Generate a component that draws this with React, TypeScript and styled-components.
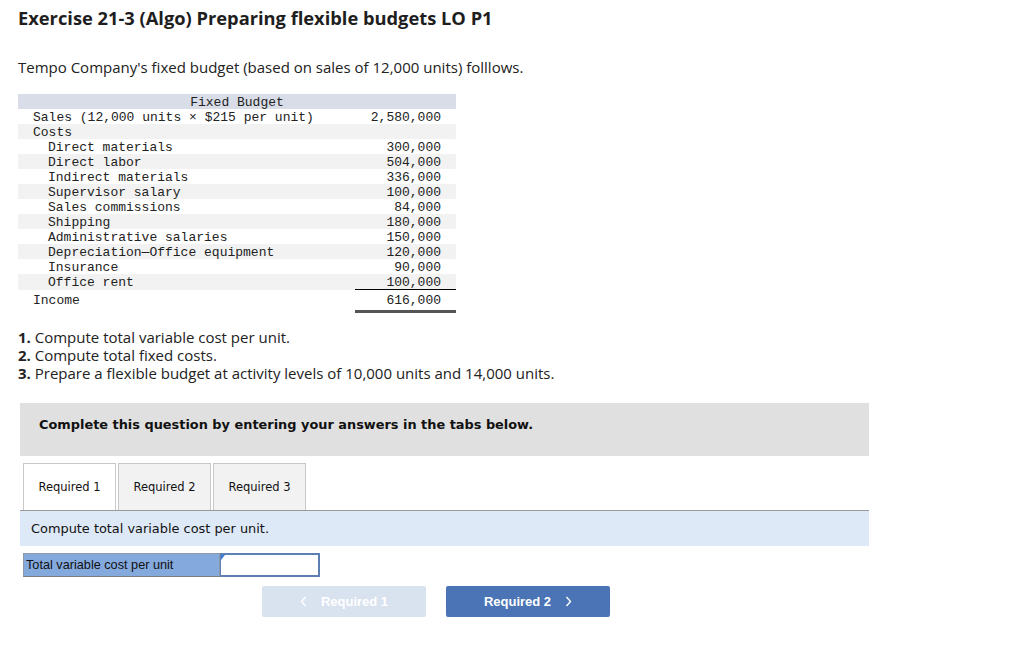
import React from "react";
import styled, { createGlobalStyle } from "styled-components";

const Global = createGlobalStyle`
  html, body { margin: 0; padding: 0; background: #fff; }
  body { font-family: "Open Sans", "Liberation Sans", sans-serif; color: #1a1a1a; }
`;

const Page = styled.div`
  width: 1024px;
  height: 664px;
  padding-left: 18px;
  box-sizing: border-box;
  overflow: hidden;
`;

const Title = styled.h1`
  margin: 0;
  padding-top: 6px;
  font-size: 18.3px;
  line-height: 24px;
  font-weight: 700;
  color: #1e1e1e;
`;

const Intro = styled.p`
  margin: 27px 0 0;
  font-size: 15px;
  line-height: 20px;
  color: #222;
`;

const BudgetTable = styled.table`
  margin-top: 17px;
  width: 438px;
  border-collapse: collapse;
  font-family: "Liberation Mono", "Courier New", monospace;
  font-size: 13px;
  color: #222;
`;

const HeadCell = styled.th`
  background: #d9dde7;
  font-weight: 400;
  text-align: center;
  line-height: 13px;
  height: 13px;
  padding: 2px 0 0;
`;

const Row = styled.tr<{ $striped?: boolean }>`
  background: ${(p) => (p.$striped ? "#f2f2f2" : "#fff")};
`;

const LabelCell = styled.td<{ $indent?: number; $tall?: boolean }>`
  padding: ${(p) => (p.$tall ? "4px" : "2px")} 0 0 ${(p) => 15 + (p.$indent ?? 0) * 15}px;
  line-height: 13px;
  height: ${(p) => (p.$tall ? "16px" : "13px")};
  vertical-align: top;
  white-space: pre;
`;

const ValueCell = styled.td<{ $rule?: "single" | "double"; $tall?: boolean }>`
  width: 86px;
  padding: ${(p) => (p.$tall ? "4px" : "2px")} 15px 0 0;
  text-align: right;
  line-height: 13px;
  height: ${(p) => (p.$tall ? "16px" : "13px")};
  vertical-align: top;
  border-bottom: ${(p) =>
    p.$rule === "single" ? "1px solid #000" : p.$rule === "double" ? "3px solid #555" : "none"};
`;

const Steps = styled.ol`
  list-style: none;
  margin: 15px 0 0;
  padding: 0;
  font-size: 15px;
  line-height: 18px;
  color: #222;
`;

const Step = styled.li`
  b { font-weight: 700; }
`;

const Question = styled.section`
  margin-left: 2px;
  width: 849px;
  margin-top: 21px;
  font-family: "DejaVu Sans", Verdana, sans-serif;
`;

const Prompt = styled.div`
  background: #e0e0e0;
  padding: 14px 19px 23px;
  font-size: 12.9px;
  line-height: 16px;
  font-weight: 700;
  color: #111;
`;

const TabBar = styled.div`
  margin-top: 7px;
  display: flex;
  gap: 2px;
  padding-left: 3px;
  border-bottom: 1px solid #9a9a9a;
`;

const Tab = styled.div<{ $active?: boolean }>`
  width: 93px;
  height: 47px;
  box-sizing: border-box;
  border: 1px solid #c8c8c8;
  border-bottom: none;
  background: ${(p) => (p.$active ? "#fff" : "#f2f2f2")};
  display: flex;
  align-items: center;
  justify-content: center;
  font-size: 11.5px;
  color: #111;
`;

const Instruction = styled.div`
  background: #dde9f6;
  height: 35px;
  display: flex;
  align-items: center;
  padding-left: 11px;
  font-size: 12.9px;
  color: #111;
`;

const AnswerRow = styled.div`
  margin: 7px 0 0 3px;
  display: flex;
  height: 24px;
`;

const AnswerLabel = styled.div`
  width: 197px;
  box-sizing: border-box;
  background: #84a9dd;
  border: 1px solid #8e9aab;
  border-bottom-color: #7d7d7d;
  display: flex;
  align-items: center;
  padding-left: 2px;
  font-family: "Liberation Sans", Arial, sans-serif;
  font-size: 12.7px;
  color: #111;
`;

const AnswerInput = styled.div`
  position: relative;
  width: 100px;
  box-sizing: border-box;
  background: #fff;
  border: 2px solid #5d7fb3;
  border-left-width: 1px;
`;

const Marker = styled.span`
  position: absolute;
  left: 0;
  top: 0;
  width: 0;
  height: 0;
  border-top: 5px solid #3b7bd6;
  border-right: 4px solid transparent;
`;

const NavRow = styled.div`
  margin-top: 9px;
  display: flex;
  gap: 20px;
  padding-left: 242px;
`;

const NavButton = styled.button<{ $enabled?: boolean }>`
  width: 164px;
  height: 31px;
  border: none;
  border-radius: 2px;
  background: ${(p) => (p.$enabled ? "#4a74b5" : "#d9e2ef")};
  color: #fff;
  font-family: "Liberation Sans", Arial, sans-serif;
  font-size: 13px;
  font-weight: 700;
  display: flex;
  align-items: center;
  justify-content: center;
  gap: 14px;
  padding: 0;
  cursor: pointer;
`;

const Chevron = ({ dir }: { dir: "left" | "right" }) => (
  <svg width="7" height="11" viewBox="0 0 7 11" fill="none">
    <path
      d={dir === "left" ? "M5.5 1 L1.5 5.5 L5.5 10" : "M1.5 1 L5.5 5.5 L1.5 10"}
      stroke="#fff"
      strokeWidth="1.4"
    />
  </svg>
);

type Line = { label: string; value?: string; indent?: number; rule?: "single" | "double"; tall?: boolean };

const lines: Line[] = [
  { label: "Sales (12,000 units × $215 per unit)", value: "2,580,000" },
  { label: "Costs" },
  { label: "Direct materials", value: "300,000", indent: 1 },
  { label: "Direct labor", value: "504,000", indent: 1 },
  { label: "Indirect materials", value: "336,000", indent: 1 },
  { label: "Supervisor salary", value: "100,000", indent: 1 },
  { label: "Sales commissions", value: "84,000", indent: 1 },
  { label: "Shipping", value: "180,000", indent: 1 },
  { label: "Administrative salaries", value: "150,000", indent: 1 },
  { label: "Depreciation—Office equipment", value: "120,000", indent: 1 },
  { label: "Insurance", value: "90,000", indent: 1 },
  { label: "Office rent", value: "100,000", indent: 1, rule: "single" },
  { label: "Income", value: "616,000", rule: "double", tall: true },
];

export default function App() {
  return (
    <>
      <Global />
      <Page>
        <Title>Exercise 21-3 (Algo) Preparing flexible budgets LO P1</Title>
        <Intro>Tempo Company's fixed budget (based on sales of 12,000 units) folllows.</Intro>
        <BudgetTable>
          <thead>
            <tr>
              <HeadCell colSpan={2}>Fixed Budget</HeadCell>
            </tr>
          </thead>
          <tbody>
            {lines.map((l, i) => (
              <Row key={l.label} $striped={i % 2 === 1}>
                <LabelCell $indent={l.indent} $tall={l.tall}>{l.label}</LabelCell>
                <ValueCell $rule={l.rule} $tall={l.tall}>{l.value ?? ""}</ValueCell>
              </Row>
            ))}
          </tbody>
        </BudgetTable>
        <Steps>
          <Step><b>1.</b> Compute total variable cost per unit.</Step>
          <Step><b>2.</b> Compute total fixed costs.</Step>
          <Step><b>3.</b> Prepare a flexible budget at activity levels of 10,000 units and 14,000 units.</Step>
        </Steps>
        <Question>
          <Prompt>Complete this question by entering your answers in the tabs below.</Prompt>
          <TabBar>
            <Tab $active>Required 1</Tab>
            <Tab>Required 2</Tab>
            <Tab>Required 3</Tab>
          </TabBar>
          <Instruction>Compute total variable cost per unit.</Instruction>
          <AnswerRow>
            <AnswerLabel>Total variable cost per unit</AnswerLabel>
            <AnswerInput>
              <Marker />
            </AnswerInput>
          </AnswerRow>
          <NavRow>
            <NavButton>
              <Chevron dir="left" />
              Required 1
            </NavButton>
            <NavButton $enabled>
              Required 2
              <Chevron dir="right" />
            </NavButton>
          </NavRow>
        </Question>
      </Page>
    </>
  );
}
